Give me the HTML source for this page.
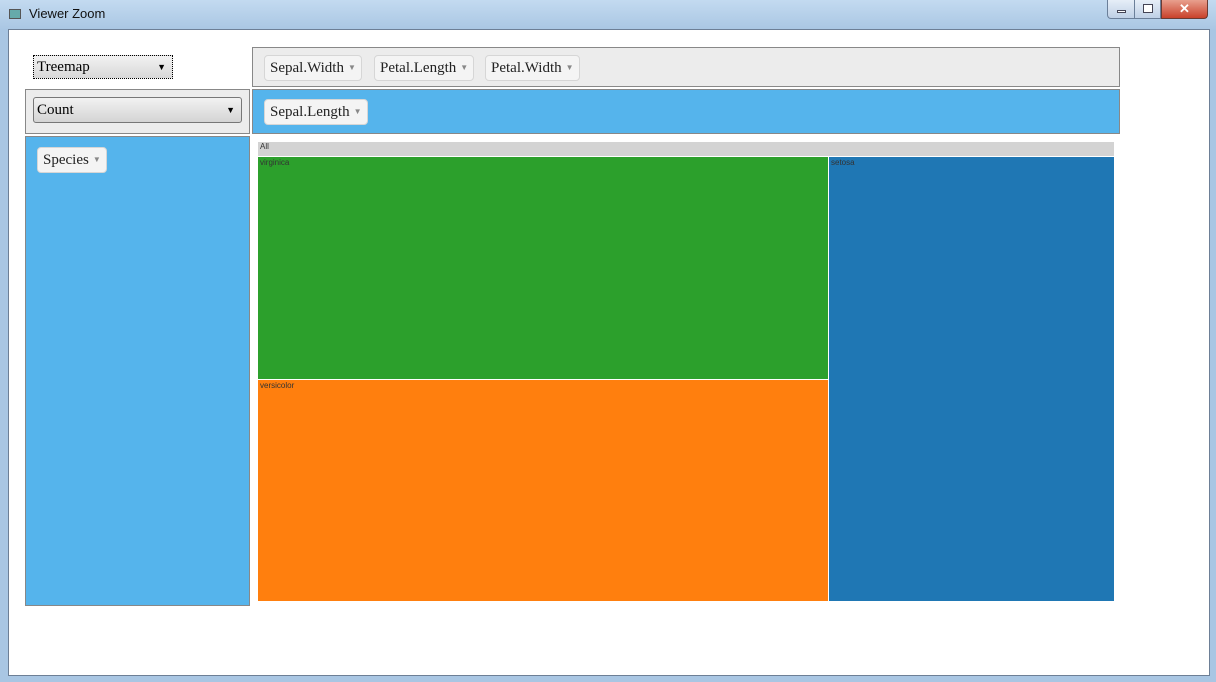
<!DOCTYPE html><html><head><style>
body{margin:0;width:1216px;height:682px;position:relative;overflow:hidden;background:#a9c6e3;font-family:"Liberation Serif",serif}
.a{position:absolute;box-sizing:border-box}
.pill{position:absolute;background:#f4f4f4;border:1px solid #d6d6d6;border-radius:4px;font-size:15px;height:24px;line-height:23px;padding:0 5px;color:#222}
.pill span{font-size:8px;color:#888;margin-left:4px;vertical-align:2px}
.lbl{font-family:"Liberation Sans",sans-serif;font-size:8px;color:#333;position:absolute;left:2px;top:1px}
</style></head><body>
<div class="a" style="left:0;top:0;width:1216px;height:30px;background:linear-gradient(#c3daf0,#a9c6e3)"></div>
<div class="a" style="left:9px;top:9px;width:12px;height:10px;border:1px solid #555;background:#6aa"></div>
<div class="a" style="left:29px;top:6px;font-family:'Liberation Sans',sans-serif;font-size:13px;color:#111">Viewer Zoom</div>
<div class="a" style="left:1107px;top:0;width:28px;height:19px;border:1px solid #6b7f99;border-top:none;border-radius:0 0 0 4px;background:linear-gradient(#e6eef8,#bfd0e6)"><div class="a" style="left:9px;top:10px;width:9px;height:3px;background:#fff;border:1px solid #445"></div></div>
<div class="a" style="left:1134px;top:0;width:27px;height:19px;border:1px solid #6b7f99;border-top:none;background:linear-gradient(#e6eef8,#bfd0e6)"><div class="a" style="left:8px;top:4px;width:10px;height:9px;border:1px solid #445;background:#fff"></div></div>
<div class="a" style="left:1161px;top:0;width:47px;height:19px;border:1px solid #6b3b33;border-top:none;border-radius:0 0 4px 0;background:linear-gradient(#e8a08e,#c9412b);color:#fff;font:bold 13px 'Liberation Sans',sans-serif;text-align:center;line-height:18px">✕</div>
<div class="a" style="left:8px;top:29px;width:1202px;height:647px;background:#fff;border:1px solid #6d7f96"></div>
<div class="a" style="left:33px;top:55px;width:140px;height:24px;border:1px dotted #000;background:linear-gradient(#f2f2f2,#d8d8d8);font-size:15px;line-height:23px;padding-left:3px">Treemap<span style="position:absolute;right:6px;top:0;font-size:9px">▼</span></div>
<div class="a" style="left:252px;top:47px;width:868px;height:40px;background:#ececec;border:1px solid #888"></div>
<div class="pill" style="left:264px;top:55px">Sepal.Width<span>▼</span></div>
<div class="pill" style="left:374px;top:55px">Petal.Length<span>▼</span></div>
<div class="pill" style="left:485px;top:55px">Petal.Width<span>▼</span></div>
<div class="a" style="left:25px;top:89px;width:225px;height:45px;background:#ececec;border:1px solid #888"></div>
<div class="a" style="left:33px;top:97px;width:209px;height:26px;border:1px solid #777;border-radius:3px;background:linear-gradient(#f2f2f2,#d4d4d4);font-size:15px;line-height:25px;padding-left:3px">Count<span style="position:absolute;right:6px;top:0;font-size:9px">▼</span></div>
<div class="a" style="left:252px;top:89px;width:868px;height:45px;background:#55b4ec;border:1px solid #888"></div>
<div class="pill" style="left:264px;top:99px">Sepal.Length<span>▼</span></div>
<div class="a" style="left:25px;top:136px;width:225px;height:470px;background:#55b4ec;border:1px solid #888"></div>
<div class="pill" style="left:37px;top:147px">Species<span>▼</span></div>
<div class="a" style="left:258px;top:142px;width:856px;height:14px;background:#d3d3d3"><div class="lbl" style="top:0">All</div></div>
<div class="a" style="left:258px;top:157px;width:570px;height:222px;background:#2ca02c"><div class="lbl">virginica</div></div>
<div class="a" style="left:258px;top:380px;width:570px;height:221px;background:#ff7f0e"><div class="lbl">versicolor</div></div>
<div class="a" style="left:829px;top:157px;width:285px;height:444px;background:#1f77b4"><div class="lbl">setosa</div></div>
</body></html>
